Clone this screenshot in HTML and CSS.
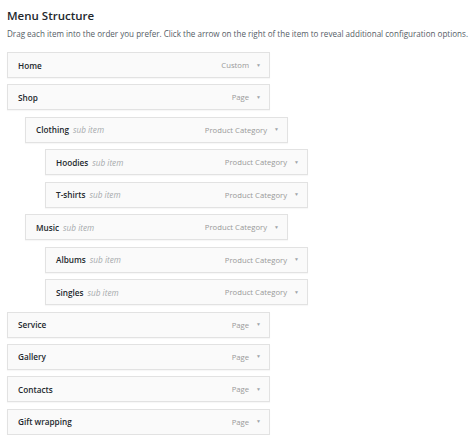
FILE: index.html
```html
<!DOCTYPE html>
<html lang="en">
<head>
<meta charset="utf-8">
<title>Menu Structure</title>
<link rel="stylesheet" href="styles.css">
</head>
<body>
<div class="page">
  <h3 class="title">Menu Structure</h3>
  <p class="desc">Drag each item into the order you prefer. Click the arrow on the right of the item to reveal additional configuration options.</p>
  <ul class="menu">
    <li class="item"><span class="label">Home</span><span class="type">Custom</span><span class="arrow">▼</span></li>
    <li class="item"><span class="label">Shop</span><span class="type">Page</span><span class="arrow">▼</span></li>
    <li class="item depth-1"><span class="label">Clothing</span><span class="sub">sub item</span><span class="type">Product Category</span><span class="arrow">▼</span></li>
    <li class="item depth-2"><span class="label">Hoodies</span><span class="sub">sub item</span><span class="type">Product Category</span><span class="arrow">▼</span></li>
    <li class="item depth-2"><span class="label">T-shirts</span><span class="sub">sub item</span><span class="type">Product Category</span><span class="arrow">▼</span></li>
    <li class="item depth-1"><span class="label">Music</span><span class="sub">sub item</span><span class="type">Product Category</span><span class="arrow">▼</span></li>
    <li class="item depth-2"><span class="label">Albums</span><span class="sub">sub item</span><span class="type">Product Category</span><span class="arrow">▼</span></li>
    <li class="item depth-2"><span class="label">Singles</span><span class="sub">sub item</span><span class="type">Product Category</span><span class="arrow">▼</span></li>
    <li class="item"><span class="label">Service</span><span class="type">Page</span><span class="arrow">▼</span></li>
    <li class="item"><span class="label">Gallery</span><span class="type">Page</span><span class="arrow">▼</span></li>
    <li class="item"><span class="label">Contacts</span><span class="type">Page</span><span class="arrow">▼</span></li>
    <li class="item"><span class="label">Gift wrapping</span><span class="type">Page</span><span class="arrow">▼</span></li>
  </ul>
</div>
</body>
</html>
```

FILE: styles.css
```css
html, body {
  margin: 0;
  padding: 0;
  background: #ffffff;
}
body {
  font-family: "Open Sans", "Liberation Sans", sans-serif;
  color: #23282d;
}
.page {
  padding: 8px 7px 0 7px;
}
.title {
  margin: 0;
  font-size: 11.5px;
  font-weight: 600;
  line-height: 16px;
  color: #23282d;
}
.desc {
  margin: 4px 0 0 0;
  font-size: 8.07px;
  line-height: 12px;
  color: #555d66;
  white-space: nowrap;
}
.menu {
  list-style: none;
  margin: 12px 0 0 0;
  padding: 0;
  display: flex;
  flex-direction: column;
  gap: 6.45px;
}
.item {
  box-sizing: border-box;
  width: 263px;
  height: 26px;
  display: flex;
  align-items: center;
  padding: 0 8px 0 10px;
  background: #fafafa;
  border: 1px solid #e2e2e2;
  box-shadow: 0 1px 1px rgba(0,0,0,0.03);
  font-size: 8.2px;
}
.depth-1 { margin-left: 18px; }
.depth-2 { margin-left: 38px; }
.label {
  font-weight: 600;
  color: #23282d;
}
.sub {
  margin-left: 4px;
  font-style: italic;
  color: #a7aaad;
}
.type {
  margin-left: auto;
  font-size: 7.7px;
  color: #999999;
}
.arrow {
  margin-left: 7px;
  font-size: 5px;
  color: #a0a5aa;
  line-height: 1;
}
```
